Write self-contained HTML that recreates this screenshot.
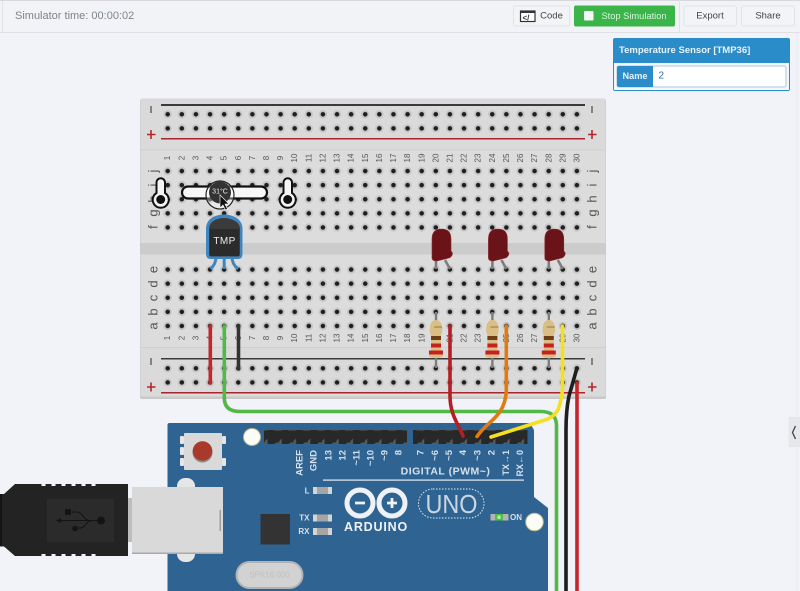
<!DOCTYPE html>
<html lang="en"><head><meta charset="utf-8"><title>Simulator</title>
<style>
html,body{margin:0;padding:0;width:800px;height:591px;overflow:hidden;background:#f2f3f8}
svg{display:block;position:absolute;left:0;top:0;filter:blur(.35px)}
text{font-family:"Liberation Sans",sans-serif}
.n{font-size:8px;fill:#555;text-anchor:middle;dominant-baseline:central}
.l{font-size:13px;fill:#555;text-anchor:middle;dominant-baseline:central}
.p{font-size:9.5px;fill:#d5e1ec;text-anchor:end;dominant-baseline:central;font-weight:bold}
.w{fill:none;stroke-linecap:round;stroke-linejoin:round;stroke-width:3.6}
.btn{fill:#f3f4f7;stroke:#e2e3e6}
.bt{font-size:9.5px;fill:#444;text-anchor:middle;dominant-baseline:central}
</style></head><body>
<svg width="800" height="591" viewBox="0 0 800 591" xmlns="http://www.w3.org/2000/svg">
<defs>
<pattern id="h" width="14.11" height="14.11" patternUnits="userSpaceOnUse">
<circle cx="7.05" cy="7.05" r="4.2" fill="#c6c6c6"/><circle cx="7.05" cy="7.05" r="2.3" fill="#1f1f1f"/>
</pattern>
<pattern id="s" width="14.25" height="14" patternUnits="userSpaceOnUse">
<rect width="14.25" height="14" fill="#282828"/>
<path d="M3 10.500H11V4.500L8.500 7V8.500H5.500Z" fill="#5a5a5a"/>
</pattern>
</defs>

<!-- page chrome -->
<rect width="800" height="591" fill="#f2f3f8"/>
<rect x="0" y="0" width="800" height="32" fill="#f2f3f7"/>
<rect x="0" y="32" width="800" height="1" fill="#dfe0e4"/>
<rect x="2" y="0" width="1" height="32" fill="#e2e3e6"/>
<rect x="0" y="0" width="800" height="1" fill="#d8d8dc"/>
<rect x="679" y="0" width="1" height="32" fill="#e2e3e6"/>
<rect x="796" y="33" width="2" height="558" fill="#eceef2"/>
<text x="15" y="16" font-size="11" fill="#7d838a" dominant-baseline="central">Simulator time: 00:00:02</text>

<rect class="btn" x="513.500" y="6" width="56" height="20" rx="2"/>
<rect x="520.500" y="11" width="14.500" height="10.500" fill="#fff" stroke="#333" stroke-width="1.200"/>
<rect x="520.500" y="11" width="14.500" height="2" fill="#333"/>
<text x="522.500" y="20.400" font-size="8" font-weight="bold" fill="#333">&lt;/</text>
<text class="bt" x="551.500" y="16">Code</text>
<rect x="574" y="5.500" width="101" height="21" rx="2" fill="#3bb54a"/>
<rect x="584" y="11" width="9.500" height="9.500" rx="1" fill="#f4f8f4"/>
<text x="634" y="16" font-size="9.300" fill="#d9f2dc" text-anchor="middle" dominant-baseline="central">Stop Simulation</text>
<rect class="btn" x="684" y="6" width="52.500" height="20" rx="2"/>
<text class="bt" x="710" y="16">Export</text>
<rect class="btn" x="741.500" y="6" width="53" height="20" rx="2"/>
<text class="bt" x="768" y="16">Share</text>

<!-- property panel -->
<rect x="613" y="38" width="177" height="53" rx="2" fill="#2a8cc8"/>
<rect x="614" y="63" width="175" height="27" fill="#f4f7fa"/>
<text x="619" y="50.500" font-size="9.500" font-weight="bold" fill="#e8f3fa" dominant-baseline="central">Temperature Sensor [TMP36]</text>
<rect x="617" y="66" width="169" height="21" rx="2" fill="#fff" stroke="#a9c9dd"/>
<path d="M619 66H653V87H619Q617 87 617 85V68Q617 66 619 66Z" fill="#2a8cc8"/>
<text x="622.500" y="76" font-size="9.200" font-weight="bold" fill="#e8f3fa" dominant-baseline="central">Name</text>
<text x="658.500" y="76" font-size="10" fill="#2f6f9f" dominant-baseline="central">2</text>

<!-- side tab -->
<rect x="788.500" y="417" width="11.500" height="30" fill="#e6e7ea"/>
<path d="M795.500 426L792.500 432.500L795.500 439" fill="none" stroke="#444" stroke-width="1.300"/>

<!-- breadboard -->
<rect x="140" y="99" width="466" height="300" rx="2" fill="#c9c9c9"/>
<rect x="140.500" y="98.500" width="465" height="298" rx="2" fill="#dadada"/>
<rect x="140.500" y="150" width="465" height="197" fill="#dcdcdc"/>
<rect x="140.500" y="149.500" width="465" height="1" fill="#cfcfcf"/>
<rect x="140.500" y="347" width="465" height="1" fill="#cfcfcf"/>
<rect x="140.500" y="243" width="465" height="11.500" fill="#cccccc"/>
<g transform="translate(160.650 107.250)"><rect width="423.300" height="28.220" fill="url(#h)"/></g>
<g transform="translate(160.650 164)"><rect width="423.300" height="70.550" fill="url(#h)"/></g>
<g transform="translate(160.650 262.500)"><rect width="423.300" height="70.550" fill="url(#h)"/></g>
<g transform="translate(160.650 361.300)"><rect width="423.300" height="28.220" fill="url(#h)"/></g>
<rect x="161" y="104" width="424" height="2" fill="#3a3a3a"/>
<rect x="161" y="138" width="424" height="1.500" fill="#a8262c"/>
<rect x="161" y="358" width="424" height="1.500" fill="#3a3a3a"/>
<rect x="161" y="392" width="424" height="1.500" fill="#a8262c"/>
<path d="M151 106V113M592 106V113M151 358V365M592 358V365" stroke="#555" stroke-width="1.300"/>
<path d="M147 134.500H155.500M151 130V139M588 134.500H596.500M592 130V139M147 387H155.500M151 382.500V391.500M588 387H596.500M592 382.500V391.500" stroke="#b3262c" stroke-width="1.600"/>

<!-- column numbers -->
<g>
<text class="n" transform="translate(167.700 158) rotate(-90)">1</text><text class="n" transform="translate(181.800 158) rotate(-90)">2</text><text class="n" transform="translate(195.900 158) rotate(-90)">3</text><text class="n" transform="translate(210 158) rotate(-90)">4</text><text class="n" transform="translate(224.100 158) rotate(-90)">5</text><text class="n" transform="translate(238.300 158) rotate(-90)">6</text><text class="n" transform="translate(252.400 158) rotate(-90)">7</text><text class="n" transform="translate(266.500 158) rotate(-90)">8</text><text class="n" transform="translate(280.600 158) rotate(-90)">9</text><text class="n" transform="translate(294.700 158) rotate(-90)">10</text>
<text class="n" transform="translate(308.800 158) rotate(-90)">11</text><text class="n" transform="translate(322.900 158) rotate(-90)">12</text><text class="n" transform="translate(337.100 158) rotate(-90)">13</text><text class="n" transform="translate(351.200 158) rotate(-90)">14</text><text class="n" transform="translate(365.300 158) rotate(-90)">15</text><text class="n" transform="translate(379.400 158) rotate(-90)">16</text><text class="n" transform="translate(393.500 158) rotate(-90)">17</text><text class="n" transform="translate(407.600 158) rotate(-90)">18</text><text class="n" transform="translate(421.800 158) rotate(-90)">19</text><text class="n" transform="translate(435.900 158) rotate(-90)">20</text>
<text class="n" transform="translate(450 158) rotate(-90)">21</text><text class="n" transform="translate(464.100 158) rotate(-90)">22</text><text class="n" transform="translate(478.200 158) rotate(-90)">23</text><text class="n" transform="translate(492.300 158) rotate(-90)">24</text><text class="n" transform="translate(506.400 158) rotate(-90)">25</text><text class="n" transform="translate(520.600 158) rotate(-90)">26</text><text class="n" transform="translate(534.700 158) rotate(-90)">27</text><text class="n" transform="translate(548.800 158) rotate(-90)">28</text><text class="n" transform="translate(562.900 158) rotate(-90)">29</text><text class="n" transform="translate(577 158) rotate(-90)">30</text>
<text class="n" transform="translate(167.700 338) rotate(-90)">1</text><text class="n" transform="translate(181.800 338) rotate(-90)">2</text><text class="n" transform="translate(195.900 338) rotate(-90)">3</text><text class="n" transform="translate(210 338) rotate(-90)">4</text><text class="n" transform="translate(224.100 338) rotate(-90)">5</text><text class="n" transform="translate(238.300 338) rotate(-90)">6</text><text class="n" transform="translate(252.400 338) rotate(-90)">7</text><text class="n" transform="translate(266.500 338) rotate(-90)">8</text><text class="n" transform="translate(280.600 338) rotate(-90)">9</text><text class="n" transform="translate(294.700 338) rotate(-90)">10</text>
<text class="n" transform="translate(308.800 338) rotate(-90)">11</text><text class="n" transform="translate(322.900 338) rotate(-90)">12</text><text class="n" transform="translate(337.100 338) rotate(-90)">13</text><text class="n" transform="translate(351.200 338) rotate(-90)">14</text><text class="n" transform="translate(365.300 338) rotate(-90)">15</text><text class="n" transform="translate(379.400 338) rotate(-90)">16</text><text class="n" transform="translate(393.500 338) rotate(-90)">17</text><text class="n" transform="translate(407.600 338) rotate(-90)">18</text><text class="n" transform="translate(421.800 338) rotate(-90)">19</text><text class="n" transform="translate(435.900 338) rotate(-90)">20</text>
<text class="n" transform="translate(450 338) rotate(-90)">21</text><text class="n" transform="translate(464.100 338) rotate(-90)">22</text><text class="n" transform="translate(478.200 338) rotate(-90)">23</text><text class="n" transform="translate(492.300 338) rotate(-90)">24</text><text class="n" transform="translate(506.400 338) rotate(-90)">25</text><text class="n" transform="translate(520.600 338) rotate(-90)">26</text><text class="n" transform="translate(534.700 338) rotate(-90)">27</text><text class="n" transform="translate(548.800 338) rotate(-90)">28</text><text class="n" transform="translate(562.900 338) rotate(-90)">29</text><text class="n" transform="translate(577 338) rotate(-90)">30</text>
</g>
<!-- row letters -->
<g>
<text class="l" transform="translate(153 171) rotate(-90)">j</text><text class="l" transform="translate(153 185) rotate(-90)">i</text><text class="l" transform="translate(153 199) rotate(-90)">h</text><text class="l" transform="translate(153 213) rotate(-90)">g</text><text class="l" transform="translate(153 227) rotate(-90)">f</text>
<text class="l" transform="translate(153 269.500) rotate(-90)">e</text><text class="l" transform="translate(153 284) rotate(-90)">d</text><text class="l" transform="translate(153 298) rotate(-90)">c</text><text class="l" transform="translate(153 312) rotate(-90)">b</text><text class="l" transform="translate(153 326) rotate(-90)">a</text>
<text class="l" transform="translate(592 171) rotate(-90)">j</text><text class="l" transform="translate(592 185) rotate(-90)">i</text><text class="l" transform="translate(592 199) rotate(-90)">h</text><text class="l" transform="translate(592 213) rotate(-90)">g</text><text class="l" transform="translate(592 227) rotate(-90)">f</text>
<text class="l" transform="translate(592 269.500) rotate(-90)">e</text><text class="l" transform="translate(592 284) rotate(-90)">d</text><text class="l" transform="translate(592 298) rotate(-90)">c</text><text class="l" transform="translate(592 312) rotate(-90)">b</text><text class="l" transform="translate(592 326) rotate(-90)">a</text>
</g>

<!-- LEDs -->
<g>
<path d="M436 260V269M445 260L450 269" stroke="#7d7d7d" stroke-width="2.600" fill="none"/>
<path d="M432 258V239Q432 229 441.500 229Q451 229 451 239V251L452.500 253Q452.500 256.500 449 258L437 261Q432 261 432 258Z" fill="#6a141a" stroke="#8e2a30" stroke-width=".6"/>
</g>
<g transform="translate(56.400 0)">
<path d="M436 260V269M445 260L450 269" stroke="#7d7d7d" stroke-width="2.600" fill="none"/>
<path d="M432 258V239Q432 229 441.500 229Q451 229 451 239V251L452.500 253Q452.500 256.500 449 258L437 261Q432 261 432 258Z" fill="#6a141a" stroke="#8e2a30" stroke-width=".6"/>
</g>
<g transform="translate(112.800 0)">
<path d="M436 260V269M445 260L450 269" stroke="#7d7d7d" stroke-width="2.600" fill="none"/>
<path d="M432 258V239Q432 229 441.500 229Q451 229 451 239V251L452.500 253Q452.500 256.500 449 258L437 261Q432 261 432 258Z" fill="#6a141a" stroke="#8e2a30" stroke-width=".6"/>
</g>

<!-- resistors -->
<g>
<path d="M436 312V368" stroke="#7d7d7d" stroke-width="2.400"/>
<path d="M436 320Q441 320 442 327Q443 331 441 335V350Q443 353 443 356Q442 358 436 358Q430 358 429 356Q429 353 431 350V335Q429 331 430 327Q431 320 436 320Z" fill="#dabf85"/>
<rect x="434" y="326.500" width="8" height="1" fill="#8f7a44"/>
<rect x="431" y="336" width="10" height="4" fill="#6e3f16"/><rect x="431" y="343.500" width="10" height="4" fill="#c8201f"/><rect x="429" y="350.500" width="14" height="4" fill="#c8201f"/>
</g>
<g transform="translate(56.400 0)">
<path d="M436 312V368" stroke="#7d7d7d" stroke-width="2.400"/>
<path d="M436 320Q441 320 442 327Q443 331 441 335V350Q443 353 443 356Q442 358 436 358Q430 358 429 356Q429 353 431 350V335Q429 331 430 327Q431 320 436 320Z" fill="#dabf85"/>
<rect x="434" y="326.500" width="8" height="1" fill="#8f7a44"/>
<rect x="431" y="336" width="10" height="4" fill="#6e3f16"/><rect x="431" y="343.500" width="10" height="4" fill="#c8201f"/><rect x="429" y="350.500" width="14" height="4" fill="#c8201f"/>
</g>
<g transform="translate(112.800 0)">
<path d="M436 312V368" stroke="#7d7d7d" stroke-width="2.400"/>
<path d="M436 320Q441 320 442 327Q443 331 441 335V350Q443 353 443 356Q442 358 436 358Q430 358 429 356Q429 353 431 350V335Q429 331 430 327Q431 320 436 320Z" fill="#dabf85"/>
<rect x="434" y="326.500" width="8" height="1" fill="#8f7a44"/>
<rect x="431" y="336" width="10" height="4" fill="#6e3f16"/><rect x="431" y="343.500" width="10" height="4" fill="#c8201f"/><rect x="429" y="350.500" width="14" height="4" fill="#c8201f"/>
</g>

<!-- TMP sensor -->
<path d="M216 257Q216 264 210.500 269M224.200 257V269M232 257Q232 264 238 269" fill="none" stroke="#3f86c0" stroke-width="3"/>
<path d="M206 254V229Q206 221 213 217Q224 212 235 217Q242.500 221 242.500 229V254Q242.500 259 238 259H211Q206 259 206 254Z" fill="#3f86c0"/>
<path d="M209 254V229Q209 223 215 220Q224 216 233 220Q240 223 240 229V254Q240 256.500 237.500 256.500H211.500Q209 256.500 209 254Z" fill="#3b3b3b"/>
<rect x="210" y="229" width="29" height="27" fill="#2b2b2b"/>
<text x="224.500" y="241.500" font-size="10" fill="#eee" text-anchor="middle" dominant-baseline="central" letter-spacing=".4">TMP</text>

<!-- temperature slider -->
<g fill="#f4f4f4" stroke="#111" stroke-width="2">
<path d="M156.500 193V182.500A4.200 4.200 0 0 1 165 182.500V193A8 8 0 1 1 156.500 193Z"/>
<path d="M283.500 193V182.500A4.200 4.200 0 0 1 292 182.500V193A8 8 0 1 1 283.500 193Z"/>
</g>
<circle cx="160.700" cy="199.500" r="4.500" fill="#111"/><circle cx="287.700" cy="199.500" r="4.500" fill="#111"/>
<rect x="182" y="186.500" width="85" height="12" rx="6" fill="#f7f7f7" stroke="#111" stroke-width="2.200"/>
<circle cx="220" cy="195" r="14" fill="#fff" fill-opacity=".35" stroke="#222" stroke-width="1.200"/>
<circle cx="220" cy="192.500" r="11" fill="#333"/>
<text x="220" y="192" font-size="7" fill="#eee" text-anchor="middle" dominant-baseline="central">31°C</text>
<path d="M220 195V208L223 205L225.500 210L227.500 209L225 204H229Z" fill="#111" stroke="#fff" stroke-width=".6"/>

<!-- Arduino -->
<path d="M169.500 423H530L534 430V497L548 508V591H167.500V425Q167.500 423 169.500 423Z" fill="#2f6391"/>
<rect x="264" y="430" width="143" height="14" fill="url(#s)"/>
<rect x="413" y="430" width="114.500" height="14" fill="url(#s)"/>
<circle cx="252" cy="437" r="8.500" fill="#fdfdf8" stroke="#b9b68c" stroke-width="1"/>
<circle cx="534.500" cy="522" r="8.800" fill="#fdfdf8" stroke="#b9b68c" stroke-width="1"/>
<!-- reset button -->
<g fill="#e6e6e6"><rect x="180" y="436" width="4" height="8" rx="1"/><rect x="180" y="447" width="4" height="8" rx="1"/><rect x="180" y="458" width="4" height="8" rx="1"/><rect x="222" y="436" width="4" height="8" rx="1"/><rect x="222" y="458" width="4" height="8" rx="1"/></g>
<rect x="184" y="433" width="38" height="37" rx="1" fill="#d9d9d9"/>
<circle cx="202.500" cy="452.500" r="10" fill="#8d8d8d"/>
<circle cx="202.500" cy="451" r="9.800" fill="#a9392a"/>
<!-- USB tabs & housing -->
<rect x="177" y="478" width="18" height="84" rx="8" fill="#e6e6e6"/>
<rect x="128" y="498" width="5" height="44" fill="#bdbdbd"/>
<rect x="132" y="487" width="91" height="67" fill="#a9a9a9"/>
<rect x="132" y="487" width="91" height="65.500" fill="#d9d9d9"/>
<rect x="219.500" y="510" width="1.500" height="21" fill="#9e9e9e"/>
<!-- USB plug -->
<path d="M15 484H128V556H15L4 546.500H0V494H4Z" fill="#232323"/>
<rect x="0" y="494" width="2" height="52" fill="#141414"/>
<g fill="#f2f3f8"><rect x="41.500" y="484" width="4" height="2"/><rect x="51.500" y="484" width="4" height="2"/><rect x="61.500" y="484" width="4" height="2"/><rect x="71.500" y="484" width="4" height="2"/><rect x="81.500" y="484" width="4" height="2"/><rect x="91.500" y="484" width="4" height="2"/><rect x="41.500" y="554" width="4" height="2"/><rect x="51.500" y="554" width="4" height="2"/><rect x="61.500" y="554" width="4" height="2"/><rect x="71.500" y="554" width="4" height="2"/><rect x="81.500" y="554" width="4" height="2"/><rect x="91.500" y="554" width="4" height="2"/></g>
<rect x="47" y="499" width="67" height="43" fill="#2b2b2b"/>
<g fill="none" stroke="#141414" stroke-width="1"><path d="M59 520.500H100M72 512H77Q80 512 83 516Q86 520.500 90 520.500M75 528H80Q83 528 86 524.500Q88 520.500 92 520.500"/></g>
<g fill="#141414"><rect x="65" y="509" width="6" height="6"/><circle cx="75" cy="528.500" r="2.800"/><circle cx="101" cy="520.500" r="4"/><path d="M56 520.500L61 518V523Z"/></g>
<!-- chips -->
<rect x="260.500" y="514" width="29.500" height="30.500" fill="#333"/>
<rect x="236.500" y="562" width="66" height="26" rx="13" fill="#d2d2d2" stroke="#b0b3b6" stroke-width="2"/>
<text x="269.500" y="575" font-size="8" fill="#c0c0c0" text-anchor="middle" dominant-baseline="central">SPK16.000</text>
<!-- SMD LEDs -->
<g fill="#d4d4d4"><rect x="313" y="487" width="19" height="7"/><rect x="313" y="514.500" width="19" height="7"/><rect x="313" y="528" width="19" height="7"/></g>
<g fill="#a5a5a5"><rect x="317" y="487" width="11" height="7"/><rect x="317" y="514.500" width="11" height="7"/><rect x="317" y="528" width="11" height="7"/></g>
<g font-size="8" font-weight="bold" fill="#d5e1ec" text-anchor="end" dominant-baseline="central"><text x="309.500" y="491">L</text><text x="309.500" y="518">TX</text><text x="309.500" y="531.500">RX</text></g>
<rect x="323" y="479.500" width="201" height="1.200" fill="#e8eef3"/>
<text x="445.500" y="471.500" font-size="10.500" font-weight="bold" fill="#d5e1ec" text-anchor="middle" dominant-baseline="central" letter-spacing=".5">DIGITAL (PWM~)</text>
<!-- pin labels -->
<g>
<text class="p" transform="translate(300 450) rotate(-90)">AREF</text>
<text class="p" transform="translate(314 450) rotate(-90)">GND</text>
<text class="p" transform="translate(329 450) rotate(-90)">13</text>
<text class="p" transform="translate(343 450) rotate(-90)">12</text>
<text class="p" transform="translate(357 450) rotate(-90)">~11</text>
<text class="p" transform="translate(371 450) rotate(-90)">~10</text>
<text class="p" transform="translate(385 450) rotate(-90)">~9</text>
<text class="p" transform="translate(399 450) rotate(-90)">8</text>
<text class="p" transform="translate(421 450) rotate(-90)">7</text>
<text class="p" transform="translate(435.500 450) rotate(-90)">~6</text>
<text class="p" transform="translate(449.500 450) rotate(-90)">~5</text>
<text class="p" transform="translate(463.500 450) rotate(-90)">4</text>
<text class="p" transform="translate(478 450) rotate(-90)">~3</text>
<text class="p" transform="translate(492 450) rotate(-90)">2</text>
<text class="p" transform="translate(506 450) rotate(-90)" style="font-size:9px">TX→1</text>
<text class="p" transform="translate(520 450) rotate(-90)" style="font-size:9px">RX←0</text>
</g>
<!-- Arduino logo -->
<g fill="none" stroke="#eef2f6" stroke-width="5">
<circle cx="360" cy="503" r="13"/><circle cx="392" cy="503" r="13"/>
</g>
<path d="M355 503H365M387 503H397M392 498V508" stroke="#eef2f6" stroke-width="2.800" fill="none"/>
<text x="376" y="527" font-size="12.500" font-weight="bold" fill="#eef2f6" text-anchor="middle" dominant-baseline="central" letter-spacing=".8">ARDUINO</text>
<rect x="418.500" y="489" width="65.500" height="29" rx="14.500" fill="none" stroke="#e4ebf1" stroke-width="1" stroke-dasharray="1.500 1.500"/>
<text x="451.500" y="504" font-size="26" fill="#e4ebf1" fill-opacity=".85" text-anchor="middle" dominant-baseline="central" textLength="52" lengthAdjust="spacingAndGlyphs">UNO</text>
<rect x="490.500" y="514" width="18" height="6.500" fill="#b3b3b3"/>
<rect x="495" y="514" width="8" height="6.500" fill="#4fc04a"/><circle cx="499" cy="517.200" r="1.800" fill="#a9f29a"/>
<text x="510" y="517.500" font-size="8" font-weight="bold" fill="#d5e1ec" dominant-baseline="central">ON</text>

<!-- wires -->
<path class="w" d="M210.300 326V383" stroke="#c4262c"/>
<path class="w" d="M238.500 326V369" stroke="#333"/>
<path class="w" d="M224.300 326V398Q224.300 411.500 240 411.500H541Q556 411.500 556.500 425V591" stroke="#53b848"/>
<path class="w" d="M450 326V396C450 415 459 425 463 436" stroke="#b31f24"/>
<path class="w" d="M506.300 326V392C504 418 488 420 477 436.500" stroke="#e07b10"/>
<path class="w" d="M562.500 326V390C560 408 558 414 548 419L491 437" stroke="#f3e020"/>
<path class="w" d="M576.700 369L569 396Q566 410 566 430V591" stroke="#1e1e1e"/>
<path class="w" d="M577 383V591" stroke="#c4262c"/>
</svg>
</body></html>
